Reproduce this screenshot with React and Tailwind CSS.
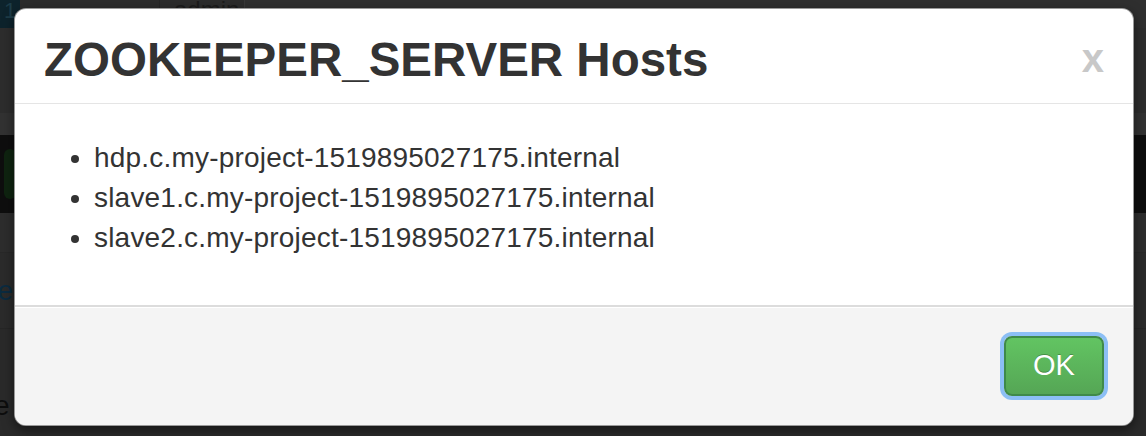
import React from "react";

const hosts = [
  "hdp.c.my-project-1519895027175.internal",
  "slave1.c.my-project-1519895027175.internal",
  "slave2.c.my-project-1519895027175.internal",
];

export default function App() {
  return (
    <div
      className="relative w-[1146px] h-[436px] overflow-hidden bg-[#2b2b2b]"
      style={{ fontFamily: '"Liberation Sans", Arial, sans-serif' }}
    >
      {/* dimmed page behind the modal */}
      <div className="flex flex-col w-full h-full">
        <div className="flex h-[28px] bg-[#2c2c2c]">
          <div className="w-[20px] bg-[#0d232c] text-[#1d3c48] text-[22px] leading-[22px] pl-[4px]">1</div>
          <div className="w-[140px] border-r border-[#262626]" />
          <div className="w-[85px] border-r border-[#383838] text-[#1b1b1b] text-[24px] leading-[20px] pl-[14px]">admin</div>
          <div className="flex-1 bg-[#2f2f2f]" />
        </div>
        <div className="h-[85px] bg-[#2d2d2d]" />
        <div className="h-[22px] bg-[#323232]" />
        <div className="h-[78px] bg-[#0e0e0e] flex items-center pl-[4px]">
          <div className="w-[12px] h-[50px] rounded-[6px] bg-[#0f2410]" />
        </div>
        <div className="h-[40px] bg-[#2d2d2d] border-b border-[#282828]" />
        <div className="h-[76px] bg-[#2b2b2b] border-b border-[#262626] flex items-center text-[#0b2b40] text-[28px]">
          <span className="-ml-[18px]">pe</span>
        </div>
        <div className="flex-1 bg-[#2a2a2a] flex items-start pt-[56px] text-[#0d0d0d] text-[28px]">
          <span className="-ml-[6px]">e</span>
        </div>
      </div>

      {/* modal */}
      <div className="absolute left-[14px] top-[8px] w-[1120px] h-[418px] flex flex-col bg-white rounded-[12px] border border-black/40 shadow-[0_4px_12px_rgba(0,0,0,0.5)] overflow-hidden">
        <div className="flex items-start justify-between pl-[29px] pr-[29px] pt-[23px] pb-[15px] border-b border-[#e5e5e5]">
          <h3 className="text-[47.5px] leading-[56px] font-bold text-[#333333]">ZOOKEEPER_SERVER Hosts</h3>
          <span className="text-[40px] leading-[40px] font-bold text-[#c8c8c8] mt-[6px]">x</span>
        </div>
        <div className="flex-1 pt-[34px]">
          <ul className="list-disc pl-[79px] text-[28px] leading-[40px] tracking-[0.2px] text-[#333333]">
            {hosts.map((h) => (
              <li key={h}>{h}</li>
            ))}
          </ul>
        </div>
        <div className="h-[120px] bg-[#f4f4f4] border-t-2 border-[#dcdcdc] shadow-[inset_0_1px_0_#ffffff] flex items-center justify-end pr-[29px]">
          <button className="w-[100px] h-[60px] rounded-[8px] border-2 border-[#3f8a4a] bg-gradient-to-b from-[#62c462] to-[#55a655] text-white text-[29px] shadow-[0_0_0_4px_#8cbff5] [text-shadow:0_-1px_0_rgba(0,0,0,0.25)]">
            OK
          </button>
        </div>
      </div>
    </div>
  );
}
